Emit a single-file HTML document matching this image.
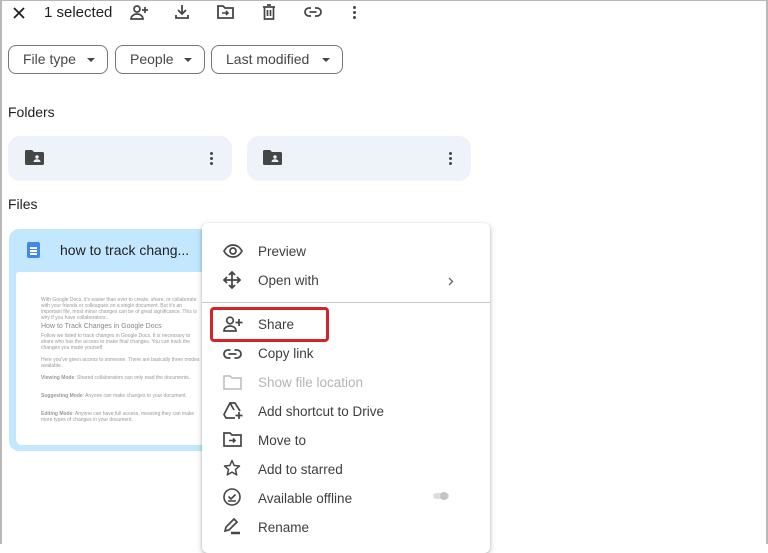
<!DOCTYPE html>
<html><head><meta charset="utf-8"><style>
*{box-sizing:border-box;margin:0;padding:0}
body{width:768px;height:544px;overflow:hidden;background:#fff;font-family:"Liberation Sans",Arial,sans-serif;color:#1f1f1f;position:relative}
.frame{position:absolute;left:0;top:0;width:768px;height:544px;border-left:2px solid #b8b8b8;border-top:1px solid #b8b8b8;border-right:2px solid #b8b8b8}
.abs{position:absolute}
svg{display:block}
.chip{position:absolute;top:45px;height:29px;border:1px solid #747775;border-radius:8px;font-size:14px;color:#444746;line-height:27px;padding-left:14px}
.chip:after{content:"";position:absolute;right:12px;top:12px;border-left:4px solid transparent;border-right:4px solid transparent;border-top:4px solid #444746}
.h{font-size:14px;color:#1f1f1f}
.folder{position:absolute;top:136px;width:224px;height:45px;background:#eef2f9;border-radius:12px}
.dots{position:absolute;width:3px;height:3px;background:#444746;border-radius:50%;box-shadow:0 5px 0 #444746,0 10px 0 #444746}
.menu{position:absolute;left:202px;top:223px;width:288px;height:330px;background:#fff;border-radius:6px;box-shadow:0 1px 3px rgba(0,0,0,.25),0 3px 8px rgba(0,0,0,.12)}
.it{position:absolute;left:56px;font-size:13.5px;color:#3c4043}
.ic{position:absolute;left:21px}
.line{position:absolute;height:1px;background:#5f5f5f}
</style></head><body>
<!-- toolbar -->
<svg class="abs" style="left:12px;top:6px" width="14" height="14" viewBox="0 0 14 14"><path d="M2 2L12 12M12 2L2 12" stroke="#1f1f1f" stroke-width="1.8"/></svg>
<div class="abs" style="left:44px;top:4px;font-size:15px;color:#1f1f1f">1 selected</div>
<svg class="abs" style="left:130px;top:4px" width="20" height="18" viewBox="0 0 20 18"><circle cx="7" cy="5" r="3" fill="none" stroke="#444746" stroke-width="1.7"/><path d="M1 15c0-3 3-5 6-5s6 2 6 5z" fill="none" stroke="#444746" stroke-width="1.7"/><path d="M15 3v6M12 6h6" stroke="#444746" stroke-width="1.7"/></svg>
<svg class="abs" style="left:174px;top:4px" width="16" height="16" viewBox="0 0 16 16"><path d="M8 1v9M4 6l4 4 4-4M2 11v3h12v-3" fill="none" stroke="#444746" stroke-width="1.8"/></svg>
<svg class="abs" style="left:217px;top:5px" width="17" height="14" viewBox="0 0 17 14"><path d="M1 1h5l2 2h8v10H1z" fill="none" stroke="#444746" stroke-width="1.8"/><path d="M5 8h6M9 6l2 2-2 2" fill="none" stroke="#444746" stroke-width="1.6"/></svg>
<svg class="abs" style="left:262px;top:4px" width="14" height="16" viewBox="0 0 14 16"><path d="M1 3h12M5 1h4M2.5 3v12h9V3M5.5 6v6M8.5 6v6" fill="none" stroke="#444746" stroke-width="1.7"/></svg>
<svg class="abs" style="left:304px;top:7px" width="18" height="10" viewBox="0 0 18 10"><path d="M7 1H5a4 4 0 000 8h2M11 1h2a4 4 0 010 8h-2M5.5 5h7" fill="none" stroke="#444746" stroke-width="1.8"/></svg>
<div class="dots" style="left:353px;top:6px"></div>
<!-- chips -->
<div class="chip" style="left:8px;width:100px">File type</div>
<div class="chip" style="left:115px;width:90px">People</div>
<div class="chip" style="left:211px;width:132px">Last modified</div>
<div class="abs h" style="left:8px;top:104px">Folders</div>
<div class="folder" style="left:8px"></div>
<div class="folder" style="left:247px"></div>
<svg class="abs" style="left:25px;top:150px" width="19" height="15" viewBox="0 0 19 15"><path d="M0 1.5A1.5 1.5 0 011.5 0H7l2 2h8.5A1.5 1.5 0 0119 3.5v10a1.5 1.5 0 01-1.5 1.5h-16A1.5 1.5 0 010 13.5z" fill="#444746"/><circle cx="12" cy="7" r="1.7" fill="#eef2f9"/><path d="M8.5 12c0-2 1.8-2.8 3.5-2.8s3.5.8 3.5 2.8z" fill="#eef2f9"/></svg>
<svg class="abs" style="left:263px;top:150px" width="19" height="15" viewBox="0 0 19 15"><path d="M0 1.5A1.5 1.5 0 011.5 0H7l2 2h8.5A1.5 1.5 0 0119 3.5v10a1.5 1.5 0 01-1.5 1.5h-16A1.5 1.5 0 010 13.5z" fill="#444746"/><circle cx="12" cy="7" r="1.7" fill="#eef2f9"/><path d="M8.5 12c0-2 1.8-2.8 3.5-2.8s3.5.8 3.5 2.8z" fill="#eef2f9"/></svg>
<div class="dots" style="left:210px;top:152px"></div>
<div class="dots" style="left:449px;top:152px"></div>
<div class="abs h" style="left:8px;top:196px">Files</div>
<!-- file card -->
<div class="abs" style="left:9px;top:229px;width:230px;height:222px;background:#c2e7ff;border-radius:10px"></div>
<div class="abs" style="left:27px;top:242px;width:13px;height:16px;background:#4285f4;border-radius:2px"></div>
<div class="abs" style="left:30px;top:247px;width:7px;height:1.5px;background:#fff;box-shadow:0 3px 0 #fff,0 6px 0 #fff"></div>
<div class="abs" style="left:60px;top:242px;font-size:14px;color:#1f1f1f">how to track chang...</div>
<div class="abs" style="left:16px;top:272px;width:200px;height:173px;background:#fff;border-radius:3px 3px 6px 6px"></div>
<div class="abs" style="left:41px;top:297px;width:160px;height:140px;font-size:5px;line-height:6px;color:#999">With Google Docs, it's easier than ever to create, share, or collaborate with your friends or colleagues on a single document. But it's an important file, most minor changes can be of great significance. This is why if you have collaborators...<div style="font-size:7px;line-height:12px;color:#888">How to Track Changes in Google Docs</div>Follow we listed to track changes in Google Docs. It is necessary to share who has the access to make final changes. You can track the changes you made yourself.<br><br>Here you've given access to someone. There are basically three modes available.<br><br><b>Viewing Mode</b>: Shared collaborators can only read the documents.<br><br><br><b>Suggesting Mode</b>: Anyone can make changes to your document.<br><br><br><b>Editing Mode</b>: Anyone can have full access, meaning they can make more types of changes in your document.</div>
<!-- menu -->
<div class="menu">
<svg class="ic" style="top:21px" width="20" height="14" viewBox="0 0 20 14"><path d="M1 7C3.5 2.5 6.5 1 10 1s6.5 1.5 9 6c-2.5 4.5-5.5 6-9 6S3.5 11.5 1 7z" fill="none" stroke="#444746" stroke-width="1.7"/><circle cx="10" cy="7" r="3" fill="none" stroke="#444746" stroke-width="1.7"/></svg>
<div class="it" style="top:21px">Preview</div>
<svg class="ic" style="top:48px" width="18" height="18" viewBox="0 0 18 18"><path d="M9 1v16M1 9h16M6 4l3-3 3 3M6 14l3 3 3-3M4 6L1 9l3 3M14 6l3 3-3 3" fill="none" stroke="#444746" stroke-width="1.8"/></svg>
<div class="it" style="top:50px">Open with</div>
<svg class="abs" style="left:246px;top:54px" width="6" height="9" viewBox="0 0 6 9"><path d="M1 1l3.5 3.5L1 8" fill="none" stroke="#666" stroke-width="1.3"/></svg>
<div class="abs" style="left:0;top:79px;width:288px;height:1px;background:#c8c8c8"></div>
<svg class="ic" style="top:93px" width="21" height="16" viewBox="0 0 21 16"><circle cx="7" cy="4.5" r="3.3" fill="none" stroke="#444746" stroke-width="1.7"/><path d="M1 15c0-3.5 3-5 6-5s6 1.5 6 5z" fill="none" stroke="#444746" stroke-width="1.7"/><path d="M16 3v7M12.5 6.5h7" stroke="#444746" stroke-width="1.7"/></svg>
<div class="it" style="top:94px">Share</div>
<svg class="ic" style="top:126px" width="19" height="10" viewBox="0 0 19 10"><path d="M7.5 1H5a4 4 0 000 8h2.5M11.5 1H14a4 4 0 010 8h-2.5M5.5 5h8" fill="none" stroke="#444746" stroke-width="1.8"/></svg>
<div class="it" style="top:123px">Copy link</div>
<svg class="ic" style="top:152px" width="19" height="15" viewBox="0 0 19 15"><path d="M1 1h6l2 2h9v11H1z" fill="none" stroke="#bbb" stroke-width="1.5"/></svg>
<div class="it" style="top:152px;color:#b4b4b4">Show file location</div>
<svg class="ic" style="top:179px" width="20" height="18" viewBox="0 0 20 18"><path d="M7 1h5l5 8M12 16H3l-2-3.5L7 1l4 7" fill="none" stroke="#444746" stroke-width="1.7"/><path d="M16 10v7M12.5 13.5h7" stroke="#444746" stroke-width="1.7"/></svg>
<div class="it" style="top:181px">Add shortcut to Drive</div>
<svg class="ic" style="top:209px" width="19" height="15" viewBox="0 0 19 15"><path d="M1 1h6l2 2h9v11H1z" fill="none" stroke="#444746" stroke-width="1.7"/><path d="M6 8.5h6M10 6.5l2 2-2 2" fill="none" stroke="#444746" stroke-width="1.6"/></svg>
<div class="it" style="top:210px">Move to</div>
<svg class="ic" style="top:236px" width="18" height="18" viewBox="0 0 18 18"><path d="M9 1.5l2.2 5 5.3.5-4 3.6 1.2 5.3L9 13.1l-4.7 2.8 1.2-5.3-4-3.6 5.3-.5z" fill="none" stroke="#444746" stroke-width="1.5" stroke-linejoin="round"/></svg>
<div class="it" style="top:239px">Add to starred</div>
<svg class="ic" style="top:265px" width="18" height="18" viewBox="0 0 18 18"><circle cx="9" cy="9" r="8" fill="none" stroke="#444746" stroke-width="1.6"/><path d="M5.5 8.5l2.5 2.5 4.5-4.5M5 13h8" fill="none" stroke="#444746" stroke-width="1.6"/></svg>
<div class="it" style="top:268px">Available offline</div>
<div class="abs" style="left:231px;top:270px;width:16px;height:6px;background:#ddd;border-radius:3px"></div>
<div class="abs" style="left:238px;top:269px;width:8px;height:8px;background:#c4c4c4;border-radius:50%"></div>
<svg class="ic" style="top:294px" width="18" height="18" viewBox="0 0 18 18"><path d="M2 14l1-4L11 2l3 3-8 8z" fill="none" stroke="#444746" stroke-width="1.7"/><path d="M8 16h9" stroke="#444746" stroke-width="2.5"/></svg>
<div class="it" style="top:297px">Rename</div>
</div>
<div class="abs" style="left:210px;top:307px;width:119px;height:35px;border:3px solid #d4232a;border-radius:4px"></div>
<div class="frame"></div>
</body></html>
